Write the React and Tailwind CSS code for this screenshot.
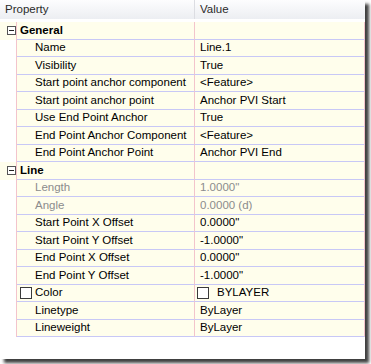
import React from 'react';

const groups = [
    {
        name: 'General',
        rows: [
            { label: 'Name', value: 'Line.1' },
            { label: 'Visibility', value: 'True' },
            { label: 'Start point anchor component', value: '<Feature>' },
            { label: 'Start point anchor point', value: 'Anchor PVI Start' },
            { label: 'Use End Point Anchor', value: 'True' },
            { label: 'End Point Anchor Component', value: '<Feature>' },
            { label: 'End Point Anchor Point', value: 'Anchor PVI End' },
        ],
    },
    {
        name: 'Line',
        rows: [
            { label: 'Length', value: '1.0000"', disabled: true },
            { label: 'Angle', value: '0.0000 (d)', disabled: true },
            { label: 'Start Point X Offset', value: '0.0000"' },
            { label: 'Start Point Y Offset', value: '-1.0000"' },
            { label: 'End Point X Offset', value: '0.0000"' },
            { label: 'End Point Y Offset', value: '-1.0000"' },
            { label: 'Color', value: 'BYLAYER', swatch: true },
            { label: 'Linetype', value: 'ByLayer' },
            { label: 'Lineweight', value: 'ByLayer' },
        ],
    },
];

const Swatch = () => (
    <span className="inline-block w-[12px] h-[12px] border border-[#3a3a3a] bg-white shrink-0" />
);

const GroupRow = ({ name }) => (
    <div className="flex h-[17.5px]">
        <div className="w-[17px] shrink-0 flex items-center pl-[7px] bg-[#fffeec] border-r border-[#f3c4cc]">
            <span className="relative w-[9px] h-[9px] border border-[#555] bg-white">
                <span className="absolute left-[1px] right-[1px] top-[3px] h-px bg-[#222]" />
            </span>
        </div>
        <div className="w-[178px] shrink-0 flex items-center pl-[3px] font-bold text-black bg-[#fffeec] border-r border-b border-r-[#f3c4cc] border-b-[#c8c8f6]">
            {name}
        </div>
        <div className="w-[170px] shrink-0 bg-[#fffeec] border-r border-b border-r-[#f3c4cc] border-b-[#c8c8f6]" />
    </div>
);

const PropRow = ({ label, value, disabled, swatch }) => {
    const tone = disabled ? 'text-[#8c8c8c]' : 'text-black';
    return (
        <div className="flex h-[17.5px]">
            <div className="w-[17px] shrink-0 bg-white border-r border-[#f3c4cc]" />
            <div className={`w-[178px] shrink-0 flex items-center ${swatch ? 'pl-[3px] gap-[3px]' : 'pl-[18px]'} bg-[#fffeec] border-r border-b border-r-[#f3c4cc] border-b-[#c8c8f6] ${tone}`}>
                {swatch && <Swatch />}
                <span className="whitespace-nowrap">{label}</span>
            </div>
            <div className={`w-[170px] shrink-0 flex items-center ${swatch ? 'pl-[2px] gap-[8px]' : 'pl-[5px]'} bg-[#fffeec] border-r border-b border-r-[#f3c4cc] border-b-[#c8c8f6] ${tone}`}>
                {swatch && <Swatch />}
                <span className="whitespace-nowrap">{value}</span>
            </div>
        </div>
    );
};

const App = () => {
    return (
        <div className="w-[371px] h-[364px] bg-white overflow-hidden">
            <div className="w-[365px] h-[359px] bg-white shadow-[4px_4px_3px_rgba(0,0,0,0.75)] text-[11.5px] leading-none font-['Liberation_Sans',sans-serif]">

                {/* Header */}
                <div className="flex h-[19px] bg-gradient-to-b from-[#fdfdfe] to-[#eceef2] text-[#2a2a2a]">
                    <div className="w-[195px] flex items-center pl-[5px] border-r border-[#dcdde2]">Property</div>
                    <div className="flex-1 flex items-center pl-[5px]">Value</div>
                </div>
                <div className="h-[3px]" />

                {/* Rows */}
                {groups.map((g) => (
                    <div key={g.name}>
                        <GroupRow name={g.name} />
                        {g.rows.map((r) => (
                            <PropRow key={r.label} {...r} />
                        ))}
                    </div>
                ))}
            </div>
        </div>
    );
};

export default App;
